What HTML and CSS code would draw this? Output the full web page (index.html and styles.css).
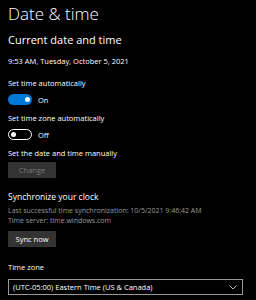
FILE: index.html
```html
<!DOCTYPE html>
<html>
<head>
<meta charset="utf-8">
<link rel="stylesheet" href="styles.css">
</head>
<body>
<div class="page">
  <h1 class="title">Date &amp; time</h1>
  <h2 class="subtitle">Current date and time</h2>
  <p class="now">9:53 AM, Tuesday, October 5, 2021</p>

  <div class="setting first">
    <div class="label">Set time automatically</div>
    <div class="toggle-row">
      <span class="toggle on"><span class="knob"></span></span>
      <span class="state">On</span>
    </div>
  </div>

  <div class="setting">
    <div class="label">Set time zone automatically</div>
    <div class="toggle-row">
      <span class="toggle off"><span class="knob"></span></span>
      <span class="state">Off</span>
    </div>
  </div>

  <div class="setting">
    <div class="label">Set the date and time manually</div>
    <button class="btn disabled">Change</button>
  </div>

  <div class="sync">
    <div class="section-title">Synchronize your clock</div>
    <div class="info">Last successful time synchronization: 10/5/2021 9:46:42 AM</div>
    <div class="info">Time server: time.windows.com</div>
    <button class="btn">Sync now</button>
  </div>

  <div class="tz">
    <div class="label">Time zone</div>
    <div class="select">
      <span>(UTC-05:00) Eastern Time (US &amp; Canada)</span>
      <svg class="chev" width="8" height="5" viewBox="0 0 8 5"><path d="M0.5 0.5 L4 4 L7.5 0.5" fill="none" stroke="#bbb" stroke-width="1"/></svg>
    </div>
  </div>
</div>
</body>
</html>
```
FILE: styles.css
```css
html, body {
  margin: 0;
  background: #000;
}
body {
  color: #fff;
  font-family: "Open Sans", "Noto Sans", sans-serif;
  width: 256px;
  height: 300px;
  overflow: hidden;
}
.page {
  padding: 0 8px;
}
.title {
  margin: 3px 0 0;
  font-size: 17px;
  font-weight: 300;
  line-height: 22px;
}
.subtitle {
  margin: 7px 0 0;
  font-size: 11px;
  font-weight: 400;
  line-height: 15px;
}
.now {
  margin: 9px 0 0;
  font-size: 7.5px;
  line-height: 10px;
}
.setting {
  margin-top: 8px;
}
.setting.first {
  margin-top: 12px;
}
.label {
  font-size: 7.5px;
  line-height: 10px;
}
.toggle-row {
  display: flex;
  align-items: center;
  gap: 6px;
  margin-top: 6px;
}
.toggle {
  box-sizing: border-box;
  width: 24px;
  height: 11px;
  border-radius: 6px;
  display: flex;
  align-items: center;
  padding: 0 2px;
}
.toggle.on {
  background: #0078d7;
  justify-content: flex-end;
}
.toggle.off {
  border: 1.5px solid #fff;
  justify-content: flex-start;
}
.knob {
  width: 5px;
  height: 5px;
  border-radius: 50%;
  background: #fff;
}
.state {
  font-size: 7.5px;
  line-height: 10px;
}
.btn {
  display: block;
  margin-top: 4px;
  width: 48px;
  height: 16px;
  padding: 0;
  border: none;
  background: #333;
  color: #fff;
  font-family: inherit;
  font-size: 7.5px;
}
.btn.disabled {
  color: #7a7a7a;
}
.sync {
  margin-top: 13px;
}
.section-title {
  font-size: 8.5px;
  line-height: 12px;
}
.info {
  font-size: 7px;
  line-height: 10px;
  color: #9a9a9a;
}
.sync .section-title {
  margin-bottom: 3px;
}
.sync .btn {
  margin-top: 5px;
}
.tz {
  margin-top: 15px;
}
.select {
  box-sizing: border-box;
  margin-top: 7px;
  width: 235px;
  height: 16px;
  border: 1px solid #999;
  display: flex;
  align-items: center;
  justify-content: space-between;
  padding: 0 5px 0 4px;
  font-size: 7.5px;
}
.chev {
  display: block;
}
```
